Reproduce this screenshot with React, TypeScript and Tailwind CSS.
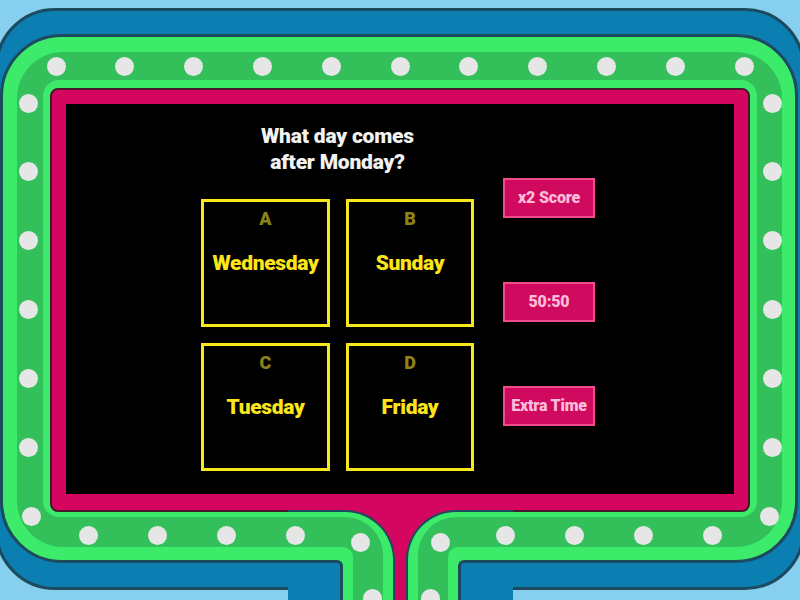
import React from 'react';

const dots: [number, number][] = [];
for (let i = 0; i < 11; i++) dots.push([56 + i * 68.8, 66]);
for (let j = 0; j < 6; j++) {
  dots.push([28, 103 + j * 68.8]);
  dots.push([772, 103 + j * 68.8]);
}
dots.push([31, 516], [769, 516]);
[88, 157, 226, 295, 505, 574, 643, 712].forEach(x => dots.push([x, 535]));
dots.push([360, 542], [440, 542], [372, 598], [430, 598]);

const answers = [
  { letter: 'A', text: 'Wednesday' },
  { letter: 'B', text: 'Sunday' },
  { letter: 'C', text: 'Tuesday' },
  { letter: 'D', text: 'Friday' },
];

const powerUps = ['x2 Score', '50:50', 'Extra Time'];

export default function App() {
  return (
    <div className="relative w-[800px] h-[600px] overflow-hidden bg-[#86cfee] pt-[8px] font-['Roboto','Liberation_Sans',sans-serif] font-black">
      {/* outer blue stage */}
      <div className="ml-[-5px] w-[810px] h-[582px] rounded-[60px] border-[3px] border-[#1c4a5f] bg-[#0b7fb2] pt-[23px] pl-[2px]">
        {/* green frame */}
        <div className="flex w-[798px] h-[529px] rounded-[62px] border-[3px] border-[#1c4a5f] bg-[#3deb6b] pt-[15px] pl-[14px] pr-[13px] pb-[13px]">
          <div className="flex flex-1 rounded-[46px] bg-[#33c05a] pt-[28px] pl-[26px] pr-[25px] pb-[30px]">
            <div className="flex flex-1 rounded-[16px] bg-[#3deb6b] pt-[8px] px-[7px] pb-[5px]">
              {/* magenta screen border */}
              <div className="flex flex-1 rounded-[8px] border-2 border-[#4a1630] bg-[#d4065f] pt-[14px] px-[14px] pb-[16px]">
                {/* black screen */}
                <div className="flex flex-1 bg-black pl-[135px] pt-[19px]">
                  <div className="flex flex-col items-center w-[273px]">
                    <div className="text-[21px] leading-[26px] text-[#f2f2f2] text-center tracking-[-0.2px]">
                      What day comes<br />after Monday?
                    </div>
                    <div className="mt-[24px] grid grid-cols-[129px_128px] gap-x-[16px] gap-y-[16px]">
                      {answers.map(a => (
                        <div key={a.letter} className="h-[128px] border-[3px] border-[#f7e81b] flex flex-col items-center">
                          <div className="pt-[6px] text-[18px] leading-[22px] text-[#8c8416]">{a.letter}</div>
                          <div className="mt-[19px] text-[21px] leading-[28px] text-[#fce51a] tracking-[-0.3px]">{a.text}</div>
                        </div>
                      ))}
                    </div>
                  </div>
                  <div className="ml-[29px] w-[92px] flex flex-col pt-[55px] gap-[64px]">
                    {powerUps.map(p => (
                      <div key={p} className="h-[40px] flex items-center justify-center whitespace-nowrap bg-[#cf0a5f] border-2 border-[#ee4c8c] text-[16px] text-[#ffbcd9] tracking-[-0.2px]">
                        {p}
                      </div>
                    ))}
                  </div>
                </div>
              </div>
            </div>
          </div>
        </div>
      </div>

      {/* blue tab under the stem */}
      <div className="absolute left-[290px] top-[565px] w-[220px] h-[35px] bg-[#0b7fb2] border-x-[3px] border-[#1c4a5f]" />
      {/* magenta stem */}
      <div className="absolute left-[340px] top-[508px] w-[121px] h-[92px] bg-[#d4065f]" />
      {/* left stem side */}
      <div className="absolute left-[288px] top-[510px] w-[107px] h-[90px] flex flex-col border-t-2 border-r-2 border-[#1c4a5f] rounded-tr-[50px] bg-[#3deb6b] pt-[5px] pr-[10px]">
        <div className="flex flex-col flex-1 rounded-tr-[38px] bg-[#33c05a] pt-[30px] pr-[30px]">
          <div className="flex flex-col flex-1 rounded-tr-[10px] bg-[#3deb6b] pt-[13px] pr-[10px]">
            <div className="flex-1 rounded-tr-[6px] border-t-[3px] border-r-[3px] border-[#1c4a5f] bg-[#0b7fb2]" />
          </div>
        </div>
      </div>
      {/* right stem side */}
      <div className="absolute left-[406px] top-[510px] w-[107px] h-[90px] flex flex-col border-t-2 border-l-2 border-[#1c4a5f] rounded-tl-[50px] bg-[#3deb6b] pt-[5px] pl-[10px]">
        <div className="flex flex-col flex-1 rounded-tl-[38px] bg-[#33c05a] pt-[30px] pl-[30px]">
          <div className="flex flex-col flex-1 rounded-tl-[10px] bg-[#3deb6b] pt-[13px] pl-[10px]">
            <div className="flex-1 rounded-tl-[6px] border-t-[3px] border-l-[3px] border-[#1c4a5f] bg-[#0b7fb2]" />
          </div>
        </div>
      </div>

      {/* marquee lights */}
      {dots.map(([x, y], i) => (
        <div
          key={i}
          className="absolute w-[19px] h-[19px] rounded-full bg-[#e6e6e6]"
          style={{ left: x - 9.5, top: y - 9.5 }}
        />
      ))}
    </div>
  );
}
